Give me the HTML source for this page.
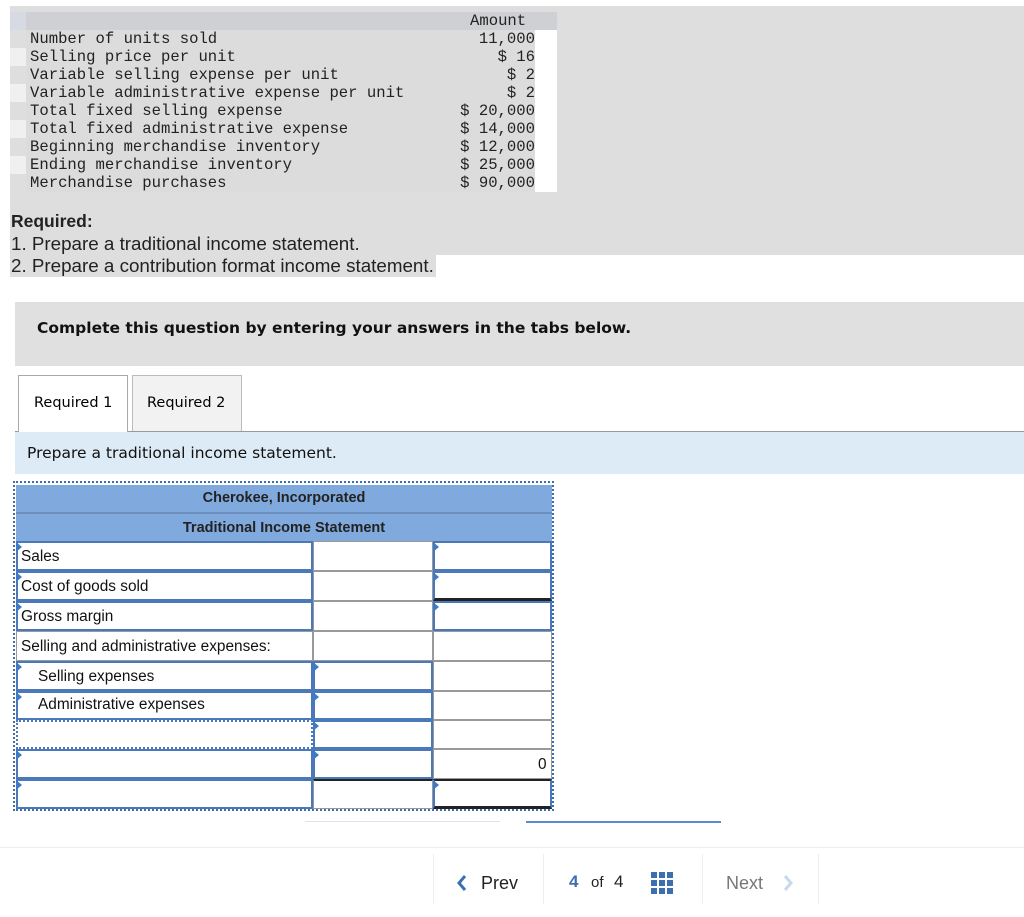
<!DOCTYPE html><html><head><style>
body{margin:0;width:1024px;height:917px;background:#fff;position:relative;font-family:"Liberation Sans",Arial,sans-serif;overflow:hidden}
.abs{position:absolute}
.mono{font-family:"Liberation Mono",monospace;font-size:15.6px;line-height:18px;color:#222}
.row{position:absolute;left:10px;width:547px;height:18px}
.lab{position:absolute;left:20px}
.val{position:absolute;right:22px}
.c{position:absolute;box-sizing:border-box;background:#fff}
.tri{position:absolute;width:0;height:0;border-top:5px solid transparent;border-bottom:5px solid transparent;border-left:6px solid #3e7ac5}
.t{position:absolute;font-size:15.4px;color:#111}
.dv{font-family:"DejaVu Sans",sans-serif}
</style></head><body>
<div class="abs" style="left:10px;top:6px;width:1014px;height:249px;background:#dedede"></div>
<div class="abs" style="left:10px;top:255px;width:426px;height:22px;background:#dedede"></div>
<div class="abs" style="left:10px;top:12px;width:16px;height:18px;background:#d6dbe3"></div>
<div class="abs" style="left:26px;top:12px;width:531px;height:18px;background:#cfd0d3"></div>
<div class="abs mono" style="left:470px;top:12px">Amount</div>
<div class="abs" style="left:26px;top:30px;width:509px;height:162px;background:#dcdcdc"></div>
<div class="abs" style="left:535px;top:30px;width:22px;height:162px;background:#fff"></div>
<div class="abs" style="left:10px;top:48px;width:16px;height:18px;background:#f0f0f0"></div>
<div class="abs" style="left:10px;top:84px;width:16px;height:18px;background:#f0f0f0"></div>
<div class="abs" style="left:10px;top:120px;width:16px;height:18px;background:#f0f0f0"></div>
<div class="abs" style="left:10px;top:156px;width:16px;height:18px;background:#f0f0f0"></div>
<div class="mono">
<div class="row" style="top:30px"><span class="lab">Number of units sold</span><span class="val">11,000</span></div>
<div class="row" style="top:48px"><span class="lab">Selling price per unit</span><span class="val">$ 16</span></div>
<div class="row" style="top:66px"><span class="lab">Variable selling expense per unit</span><span class="val">$ 2</span></div>
<div class="row" style="top:84px"><span class="lab">Variable administrative expense per unit</span><span class="val">$ 2</span></div>
<div class="row" style="top:102px"><span class="lab">Total fixed selling expense</span><span class="val">$ 20,000</span></div>
<div class="row" style="top:120px"><span class="lab">Total fixed administrative expense</span><span class="val">$ 14,000</span></div>
<div class="row" style="top:138px"><span class="lab">Beginning merchandise inventory</span><span class="val">$ 12,000</span></div>
<div class="row" style="top:156px"><span class="lab">Ending merchandise inventory</span><span class="val">$ 25,000</span></div>
<div class="row" style="top:174px"><span class="lab">Merchandise purchases</span><span class="val">$ 90,000</span></div>
</div>
<div class="abs" style="left:11px;top:211px;font-size:17.5px;font-weight:bold;color:#222">Required:</div>
<div class="abs" style="left:11px;top:233px;font-size:18.8px;color:#222">1. Prepare a traditional income statement.</div>
<div class="abs" style="left:11px;top:255px;font-size:18.8px;color:#222">2. Prepare a contribution format income statement.</div>

<div class="abs" style="left:15px;top:302px;width:1009px;height:64px;background:#e0e0e0"></div>
<div class="abs dv" style="left:37px;top:319px;font-size:15.5px;font-weight:bold;color:#111">Complete this question by entering your answers in the tabs below.</div>
<div class="abs" style="left:15px;top:431px;width:1009px;height:1px;background:#999"></div>
<div class="abs" style="left:18px;top:375px;width:110px;height:57px;box-sizing:border-box;border:1px solid #aaa;border-bottom:none;background:#fff"></div>
<div class="abs" style="left:132px;top:375px;width:110px;height:56px;box-sizing:border-box;border:1px solid #bbb;border-bottom:none;background:#f2f2f2"></div>
<div class="abs dv" style="left:34px;top:395px;font-size:14.5px">Required 1</div>
<div class="abs dv" style="left:147px;top:395px;font-size:14.5px">Required 2</div>
<div class="abs" style="left:15px;top:432px;width:1009px;height:42px;background:#ddebf7"></div>
<div class="abs dv" style="left:27px;top:444px;font-size:15.5px;color:#111">Prepare a traditional income statement.</div>

<div class="abs" style="left:13px;top:481px;width:541px;height:330px;box-sizing:border-box;border:2px dotted #3d6fb0;background:#fff"></div>
<div class="abs" style="left:16px;top:485px;width:536px;height:56px;background:#80a9dd"></div>
<div class="abs" style="left:16px;top:512px;width:536px;height:2px;background:#6d8fbd"></div>
<div class="abs" style="left:16px;top:490px;width:536px;text-align:center;font-size:14.5px;font-weight:bold;color:#222">Cherokee, Incorporated</div>
<div class="abs" style="left:16px;top:520px;width:536px;text-align:center;font-size:14.5px;font-weight:bold;color:#222">Traditional Income Statement</div>

<div class="c" style="left:16px;top:541px;width:297px;height:30px;border:2px solid #4a78b8"></div><div class="c" style="left:313px;top:541px;width:120px;height:30px;border:1px solid #999"></div><div class="c" style="left:433px;top:541px;width:119px;height:30px;border:2px solid #4a78b8"></div>
<div class="c" style="left:16px;top:571px;width:297px;height:30px;border:2px solid #4a78b8"></div><div class="c" style="left:313px;top:571px;width:120px;height:30px;border:1px solid #999"></div><div class="c" style="left:433px;top:571px;width:119px;height:30px;border:2px solid #4a78b8;border-bottom:3px solid #222"></div>
<div class="c" style="left:16px;top:601px;width:297px;height:30px;border:2px solid #4a78b8"></div><div class="c" style="left:313px;top:601px;width:120px;height:30px;border:1px solid #999"></div><div class="c" style="left:433px;top:601px;width:119px;height:30px;border:2px solid #4a78b8"></div>
<div class="c" style="left:16px;top:631px;width:297px;height:30px;border:1px solid #999"></div><div class="c" style="left:313px;top:631px;width:120px;height:30px;border:1px solid #999"></div><div class="c" style="left:433px;top:631px;width:119px;height:30px;border:1px solid #999"></div>
<div class="c" style="left:16px;top:661px;width:297px;height:30px;border:2px solid #4a78b8"></div><div class="c" style="left:313px;top:661px;width:120px;height:30px;border:2px solid #4a78b8"></div><div class="c" style="left:433px;top:661px;width:119px;height:30px;border:1px solid #999"></div>
<div class="c" style="left:16px;top:691px;width:297px;height:29px;border:2px solid #4a78b8"></div><div class="c" style="left:313px;top:691px;width:120px;height:29px;border:2px solid #4a78b8"></div><div class="c" style="left:433px;top:691px;width:119px;height:29px;border:1px solid #999"></div>
<div class="c" style="left:16px;top:720px;width:297px;height:29px;border:2px dotted #4a78b8"></div><div class="c" style="left:313px;top:720px;width:120px;height:29px;border:2px solid #4a78b8"></div><div class="c" style="left:433px;top:720px;width:119px;height:29px;border:1px solid #999"></div>
<div class="c" style="left:16px;top:749px;width:297px;height:30px;border:2px solid #4a78b8"></div><div class="c" style="left:313px;top:749px;width:120px;height:30px;border:2px solid #4a78b8"></div><div class="c" style="left:433px;top:749px;width:119px;height:30px;border:1px solid #999"></div>
<div class="c" style="left:16px;top:779px;width:297px;height:30px;border:2px solid #4a78b8"></div><div class="c" style="left:313px;top:779px;width:120px;height:30px;border:1px solid #999;border-top:2px solid #222"></div><div class="c" style="left:433px;top:779px;width:119px;height:30px;border:2px solid #4a78b8;border-bottom:3px solid #222;border-top:2px solid #222"></div>
<div class="t" style="left:21px;top:548px">Sales</div>
<div class="t" style="left:21px;top:578px">Cost of goods sold</div>
<div class="t" style="left:21px;top:608px">Gross margin</div>
<div class="t" style="left:21px;top:638px">Selling and administrative expenses:</div>
<div class="t" style="left:38px;top:668px">Selling expenses</div>
<div class="t" style="left:38px;top:696px">Administrative expenses</div>
<div class="t" style="left:538px;top:756px">0</div>
<div class="tri" style="left:16px;top:542px"></div><div class="tri" style="left:433px;top:542px"></div>
<div class="tri" style="left:16px;top:572px"></div><div class="tri" style="left:433px;top:572px"></div>
<div class="tri" style="left:16px;top:602px"></div><div class="tri" style="left:433px;top:602px"></div>
<div class="tri" style="left:16px;top:662px"></div><div class="tri" style="left:313px;top:662px"></div>
<div class="tri" style="left:16px;top:692px"></div><div class="tri" style="left:313px;top:692px"></div>
<div class="tri" style="left:313px;top:721px"></div>
<div class="tri" style="left:16px;top:750px"></div><div class="tri" style="left:313px;top:750px"></div>
<div class="tri" style="left:16px;top:780px"></div><div class="tri" style="left:433px;top:780px"></div>

<div class="abs" style="left:305px;top:821px;width:195px;height:1px;background:#dbe5f0"></div>
<div class="abs" style="left:526px;top:821px;width:195px;height:2px;background:#5b8bc8"></div>
<div class="abs" style="left:0;top:847px;width:1024px;height:1px;background:#eee"></div>
<div class="abs" style="left:433px;top:854px;width:1px;height:50px;background:#eee"></div>
<div class="abs" style="left:543px;top:854px;width:1px;height:50px;background:#eee"></div>
<div class="abs" style="left:702px;top:854px;width:1px;height:50px;background:#eee"></div>
<div class="abs" style="left:818px;top:854px;width:1px;height:50px;background:#eee"></div>
<svg class="abs" style="left:456px;top:874px" width="12" height="18"><path d="M9 2 L3 9 L9 16" stroke="#3d6fb0" stroke-width="3" fill="none"/></svg>
<div class="abs" style="left:481px;top:873px;font-size:18px;color:#222">Prev</div>
<div class="abs" style="left:569px;top:872px;font-size:17px;color:#3d6fb0;font-weight:bold">4</div>
<div class="abs" style="left:591px;top:874px;font-size:15px;color:#222">of</div>
<div class="abs" style="left:614px;top:872px;font-size:17px;color:#222">4</div>
<svg class="abs" style="left:651px;top:872px" width="22" height="22"><g fill="#3d6fb0"><rect x="0" y="0" width="6" height="6"/><rect x="8" y="0" width="6" height="6"/><rect x="16" y="0" width="6" height="6"/><rect x="0" y="8" width="6" height="6"/><rect x="8" y="8" width="6" height="6"/><rect x="16" y="8" width="6" height="6"/><rect x="0" y="16" width="6" height="6"/><rect x="8" y="16" width="6" height="6"/><rect x="16" y="16" width="6" height="6"/></g></svg>
<div class="abs" style="left:726px;top:873px;font-size:18px;color:#777">Next</div>
<svg class="abs" style="left:782px;top:874px" width="12" height="18"><path d="M3 2 L9 9 L3 16" stroke="#c8d8ec" stroke-width="3" fill="none"/></svg>
</body></html>
